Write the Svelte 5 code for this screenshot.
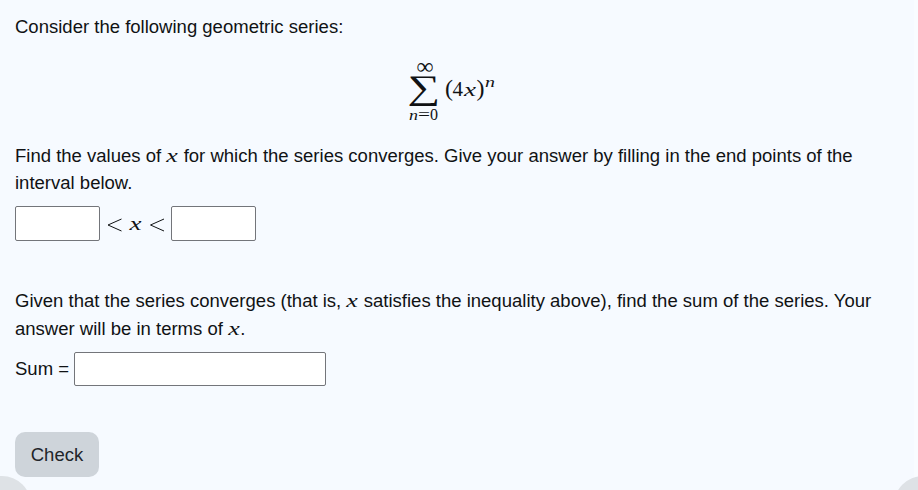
<script>
  let lower = $state('');
  let upper = $state('');
  let sum = $state('');
</script>

<main>
  <p class="intro">Consider the following geometric series:</p>

  <svg class="formula" viewBox="0 0 90 62">
    <text class="upright" x="8.5" y="13" font-size="23" textLength="17" lengthAdjust="spacingAndGlyphs">∞</text>
    <text class="upright" transform="translate(-0.8 38) scale(1.48 1.1)" x="0" y="0" font-size="31">∑</text>
    <text x="1" y="59" font-size="15.5" textLength="9" lengthAdjust="spacingAndGlyphs">n</text>
    <text class="upright" x="10" y="59" font-size="16" textLength="12" lengthAdjust="spacingAndGlyphs">=</text>
    <text class="upright" x="22" y="59" font-size="16">0</text>
    <text class="upright" x="37" y="34.5" font-size="24">(</text>
    <text class="upright" x="44.5" y="35" font-size="21">4</text>
    <text x="56" y="35" font-size="18.5" textLength="12" lengthAdjust="spacingAndGlyphs">x</text>
    <text class="upright" x="68.5" y="34.5" font-size="24">)</text>
    <text x="77" y="25.5" font-size="15" textLength="10" lengthAdjust="spacingAndGlyphs">n</text>
  </svg>

  <p class="question">
    Find the values of <i>x</i> for which the series converges. Give your answer by filling in the end points of the interval below.
  </p>

  <div class="row interval">
    <input bind:value={lower} aria-label="Lower end point" />
    <svg class="inequality" viewBox="0 0 71 34">
      <path d="M21.5 12 8 18l13.5 6M64 12l-13.5 6L64 24" />
      <text x="29.5" y="23" font-size="18.5" textLength="12" lengthAdjust="spacingAndGlyphs">x</text>
    </svg>
    <input bind:value={upper} aria-label="Upper end point" />
  </div>

  <p class="question">
    Given that the series converges (that is, <i>x</i> satisfies the inequality above), find the sum of the series. Your answer will be in terms of <i>x</i>.
  </p>

  <label class="row sum">
    <span>Sum =</span>
    <input bind:value={sum} />
  </label>

  <button type="button">Check</button>
  <span class="gutter"></span>
  <span class="corner left"></span>
  <span class="corner right"></span>
</main>

<style>
  :global(body) {
    background: #f6faff;
  }

  main {
    position: relative;
    box-sizing: border-box;
    height: 490px;
    padding: 13px 30px 0 15px;
    overflow: hidden;
    background: #f6faff;
    color: #101214;
    font: 18.52px/27.5px "Liberation Sans", Arial, sans-serif;
  }

  p {
    margin: 0;
  }

  svg {
    display: block;
    overflow: visible;
    fill: #101214;
    font-family: "Liberation Serif", serif;
    font-style: italic;
  }

  svg .upright {
    font-style: normal;
  }

  .formula {
    width: 90px;
    height: 62px;
    margin: 20.5px 0 18.5px 393px;
  }

  i {
    display: inline-block;
    margin: 0 2px;
    font: italic 18.5px/20px "Liberation Serif", serif;
    transform: scaleX(1.4);
  }

  .row {
    display: flex;
    align-items: center;
  }

  .inequality {
    width: 71px;
    height: 34px;
  }

  .inequality path {
    fill: none;
    stroke: #101214;
    stroke-width: 1;
  }

  input {
    box-sizing: border-box;
    width: 85px;
    height: 35px;
    border: 1px solid #73757a;
    border-radius: 2px;
    background: #fff;
    font: inherit;
  }

  .interval {
    margin: 9.5px 0 46px;
  }

  .sum {
    gap: 5px;
    margin-top: 10px;
  }

  .sum > span {
    flex: none;
    width: 54px;
    margin-top: -1px;
    white-space: nowrap;
  }

  .sum input {
    width: 252px;
    height: 34px;
  }

  button {
    width: 84px;
    height: 45px;
    margin-top: 46px;
    padding: 0;
    border: 0;
    border-radius: 10px;
    background: #ced4da;
    color: #212529;
    font: inherit;
    display: block;
  }

  .gutter {
    position: absolute;
    inset: 0 0 0 auto;
    width: 4px;
    background: #f9fcff;
  }

  .corner {
    position: absolute;
    top: 476px;
    width: 58px;
    height: 58px;
    border-radius: 50%;
    background: #dee2e6;
  }

  .left {
    left: -27px;
  }

  .right {
    right: -34px;
  }
</style>
